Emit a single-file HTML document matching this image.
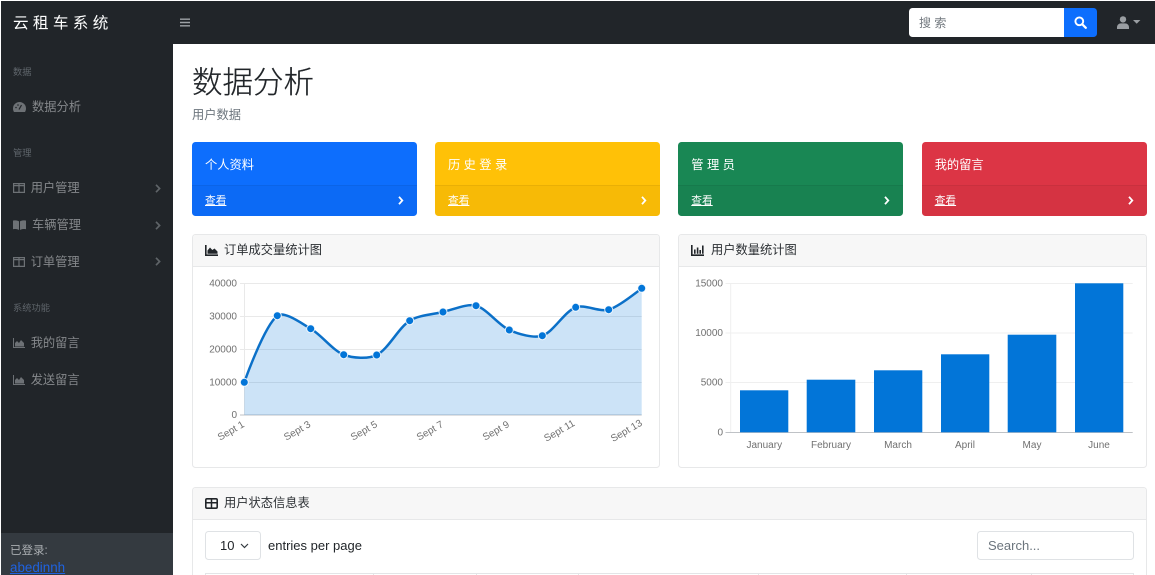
<!DOCTYPE html>
<html lang="zh">
<head>
<meta charset="utf-8">
<title>云租车系统</title>
<style>
html,body{margin:0;padding:0;background:#fff;width:1155px;height:575px;overflow:hidden}
body{position:relative;font-family:"Liberation Sans","Noto Sans CJK SC",sans-serif;color:#212529;filter:blur(.35px)}
div,a,svg{position:absolute}
.t{white-space:nowrap;line-height:20px;height:20px}
.nav{font-size:12.25px;color:#85888b}
.hd{font-size:9.25px;color:#5f656b}
.card{border-radius:3.5px;color:#fff;overflow:hidden}
.foot{left:0;right:0;top:43px;height:31px;background:rgba(0,0,0,.03);border-top:1px solid rgba(0,0,0,.055);box-sizing:border-box}
.ct{left:13px;top:12.5px;font-size:12.25px;color:#fff}
.v{left:13px;top:49px;font-size:10.7px;color:#fff;text-decoration:underline}
.box{border:1px solid #e7e8e9;border-radius:3.5px;box-sizing:border-box;background:#fff;overflow:hidden}
.ch{left:0;right:0;top:0;height:32px;background:#f7f7f7;border-bottom:1px solid #e7e8e9;box-sizing:border-box}
.ht{font-size:12.25px;color:#2b2f33}
</style>
</head>
<body>
<!-- top bar + sidebar -->
<div style="left:1px;top:1px;width:1154px;height:42.5px;background:#212529"></div>
<div style="left:1px;top:43px;width:172px;height:532px;background:#212529"></div>
<div style="left:1px;top:533px;width:172px;height:42px;background:#343a40"></div>

<div class="t" style="left:13px;top:13.5px;font-size:15.6px;color:#fff">云 租 车 系 统</div>
<svg style="left:180px;top:18px" width="10" height="9" viewBox="0 0 10 9"><path d="M0 .5h10v1.4H0zM0 3.8h10v1.4H0zM0 7.1h10v1.4H0z" fill="#9ea2a6"/></svg>

<div style="left:909px;top:8px;width:155px;height:29px;background:#fff;border-radius:3.5px 0 0 3.5px"></div>
<div class="t" style="left:919px;top:12.5px;font-size:12px;color:#73797f">搜 索</div>
<div style="left:1064px;top:8px;width:32.5px;height:29px;background:#0d6efd;border-radius:0 3.5px 3.5px 0"></div>
<svg style="left:1074px;top:16px" width="13" height="13" viewBox="0 0 13 13"><circle cx="5.3" cy="5.3" r="3.9" fill="none" stroke="#fff" stroke-width="1.9"/><path d="M8.2 8.2l3.6 3.6" stroke="#fff" stroke-width="2.2" stroke-linecap="round"/></svg>
<svg style="left:1117px;top:16px" width="12" height="13" viewBox="0 0 12 13"><circle cx="6" cy="3.4" r="3.2" fill="#9a9ea2"/><path d="M0 13v-1.6C0 9 1.8 7.4 4 7.4h4c2.2 0 4 1.6 4 4V13z" fill="#9a9ea2"/></svg>
<svg style="left:1133px;top:20px" width="8" height="4" viewBox="0 0 8 4"><path d="M0 0h7.4L3.7 3.8z" fill="#9a9ea2"/></svg>

<!-- sidebar -->
<div class="t hd" style="left:13px;top:62px">数据</div>
<svg style="left:13px;top:102px" width="13" height="10" viewBox="0 0 13 10"><path d="M6.5 0A6.5 6.5 0 0 0 0 6.5c0 1.3.4 2.5 1 3.5h11c.6-1 1-2.2 1-3.5A6.5 6.5 0 0 0 6.5 0z" fill="#6d7175"/><path d="M6 7.5L8.5 3" stroke="#212529" stroke-width="1.2"/><circle cx="3" cy="5.5" r=".8" fill="#212529"/><circle cx="5" cy="3" r=".8" fill="#212529"/></svg>
<div class="t nav" style="left:32px;top:97px">数据分析</div>

<div class="t hd" style="left:13px;top:143px">管理</div>
<svg style="left:13px;top:183px" width="12" height="10" viewBox="0 0 12 10"><path d="M.6.6h10.8v8.800H.6zM6 .6v8.800M.6 2.600h10.800" fill="none" stroke="#6d7175" stroke-width="1.2"/></svg>
<div class="t nav" style="left:30.7px;top:178px">用户管理</div>
<svg style="left:154.500px;top:184px" width="6" height="9" viewBox="0 0 6 9"><path d="M1 .8l3.6 3.700L1 8.200" fill="none" stroke="#5f6468" stroke-width="1.7"/></svg>

<svg style="left:13px;top:220px" width="13" height="10" viewBox="0 0 13 10"><path d="M0 .6C2 .2 4.3.4 6 1.400V10C4.300 9 2 8.800 0 9.200zM13 .6C11 .2 8.700.4 7 1.400V10c1.700-1 4-1.200 6-.8z" fill="#6d7175"/></svg>
<div class="t nav" style="left:32px;top:215px">车辆管理</div>
<svg style="left:154.500px;top:221px" width="6" height="9" viewBox="0 0 6 9"><path d="M1 .8l3.6 3.700L1 8.200" fill="none" stroke="#5f6468" stroke-width="1.7"/></svg>

<svg style="left:13px;top:257px" width="12" height="10" viewBox="0 0 12 10"><path d="M.6.6h10.8v8.800H.6zM6 .6v8.800M.6 2.600h10.800" fill="none" stroke="#6d7175" stroke-width="1.2"/></svg>
<div class="t nav" style="left:30.7px;top:251.5px">订单管理</div>
<svg style="left:154.500px;top:257px" width="6" height="9" viewBox="0 0 6 9"><path d="M1 .8l3.6 3.700L1 8.200" fill="none" stroke="#5f6468" stroke-width="1.7"/></svg>

<div class="t hd" style="left:13px;top:298px">系统功能</div>
<svg style="left:13px;top:338px" width="12" height="10" viewBox="0 0 12 10"><path d="M.5 0v9.500H12" fill="none" stroke="#6d7175" stroke-width="1"/><path d="M2 8.500V5l2-2 2 2 2-3 3 3v3.500z" fill="#6d7175"/></svg>
<div class="t nav" style="left:30.7px;top:333px">我的留言</div>
<svg style="left:13px;top:375px" width="12" height="10" viewBox="0 0 12 10"><path d="M.5 0v9.500H12" fill="none" stroke="#6d7175" stroke-width="1"/><path d="M2 8.500V5l2-2 2 2 2-3 3 3v3.500z" fill="#6d7175"/></svg>
<div class="t nav" style="left:30.7px;top:370px">发送留言</div>

<div class="t" style="left:10px;top:541px;font-size:11.5px;color:#a9adb1">已登录:</div>
<a class="t" style="left:10px;top:558px;font-size:13.4px;color:#1f62e0;text-decoration:underline">abedinnh</a>

<!-- heading -->
<div class="t" style="left:192px;top:63px;height:40px;line-height:40px;font-size:30.5px;font-weight:300;color:#212529;-webkit-text-stroke:.25px #212529">数据分析</div>
<div class="t" style="left:192px;top:104.5px;font-size:12.25px;color:#6c757d">用户数据</div>

<!-- colour cards -->
<div class="card" style="left:192px;top:142px;width:224.7px;height:73.5px;background:#0d6efd">
  <div class="t ct">个人资料</div><div class="foot"></div>
  <a class="t v">查看</a>
  <svg style="left:206px;top:54px" width="6" height="9" viewBox="0 0 6 9"><path d="M1 .8l3.300 3.700L1 8.200" fill="none" stroke="#fff" stroke-width="1.8"/></svg>
</div>
<div class="card" style="left:435px;top:142px;width:225px;height:73.5px;background:#ffc107">
  <div class="t ct">历 史 登 录</div><div class="foot"></div>
  <a class="t v">查看</a>
  <svg style="left:206px;top:54px" width="6" height="9" viewBox="0 0 6 9"><path d="M1 .8l3.300 3.700L1 8.200" fill="none" stroke="#fff" stroke-width="1.8"/></svg>
</div>
<div class="card" style="left:678.3px;top:142px;width:225px;height:73.5px;background:#198754">
  <div class="t ct">管 理 员</div><div class="foot"></div>
  <a class="t v">查看</a>
  <svg style="left:206px;top:54px" width="6" height="9" viewBox="0 0 6 9"><path d="M1 .8l3.300 3.700L1 8.200" fill="none" stroke="#fff" stroke-width="1.8"/></svg>
</div>
<div class="card" style="left:921.7px;top:142px;width:225px;height:73.5px;background:#dc3545">
  <div class="t ct">我的留言</div><div class="foot"></div>
  <a class="t v">查看</a>
  <svg style="left:206px;top:54px" width="6" height="9" viewBox="0 0 6 9"><path d="M1 .8l3.300 3.700L1 8.200" fill="none" stroke="#fff" stroke-width="1.8"/></svg>
</div>

<!-- chart cards -->
<div class="box" style="left:191.7px;top:234.3px;width:468px;height:234px"><div class="ch"></div></div>
<div class="box" style="left:678.3px;top:234.3px;width:468.5px;height:234px"><div class="ch"></div></div>
<div class="box" style="left:191.7px;top:487.3px;width:955px;height:100px"><div class="ch" style="height:31.5px"></div></div>

<svg style="left:205px;top:244px" width="13" height="12" viewBox="0 0 13 12"><path d="M.8 1v10.200H13" fill="none" stroke="#212529" stroke-width="1.6"/><path d="M2.500 9.800V6.500L5 3.500l2.300 2.500L9.500 4.500 12.500 7.500v2.300z" fill="#212529"/></svg>
<div class="t ht" style="left:224px;top:240px">订单成交量统计图</div>
<svg style="left:691px;top:244px" width="13" height="12" viewBox="0 0 13 12"><path d="M.8 1v10.200H13" fill="none" stroke="#212529" stroke-width="1.6"/><path d="M3 5.500h1.600v4.300H3zM5.800 3.500h1.600v6.300H5.800zM8.400 6h1.600v3.800H8.400zM11 1.500h1.600v8.300H11z" fill="#212529"/></svg>
<div class="t ht" style="left:711px;top:240px">用户数量统计图</div>
<svg style="left:205px;top:498px" width="13" height="11" viewBox="0 0 13 11"><rect x=".8" y=".8" width="11.400" height="9.400" rx="1.200" fill="none" stroke="#212529" stroke-width="1.6"/><path d="M.8 4.800h11.400M6.500 1v9" stroke="#212529" stroke-width="1.500"/></svg>
<div class="t ht" style="left:224px;top:493px">用户状态信息表</div>

<!-- charts -->
<svg style="left:0;top:0" width="1155" height="575" viewBox="0 0 1155 575" font-family="'Liberation Sans',sans-serif" font-size="10" fill="#707070">
  <g stroke="#e9e9e9" stroke-width="1">
    <path d="M240 283.500H641.700M240 316.500H641.700M240 349.500H641.700M240 382.500H641.700M244.500 283V415"/>
  </g>
  <path d="M240 415H641.700" stroke="#bfc2c6" stroke-width="1"/>
  <path d="M244.300 382.300C244.300 382.300 263.900 326.550 277.300 315.700C283.800 310.500 301.500 323.300 310.700 328.700C321.500 335 332.600 350.300 343.700 354.700C352.400 358.200 368.600 359.200 376.700 355C388.400 349 398.200 328.200 409.700 320.700C418 315.300 432.900 314.300 443 312C452.800 309.800 467 303.300 476 305.700C486.900 308.700 498.400 325 509.300 330C518.200 334 533.700 338.650 542.300 335.700C553.600 331.800 564.300 311.750 575.700 307.300C584.300 303.900 599.700 312.300 608.700 309.700C619.500 306.600 641.700 288.300 641.700 288.300V415H244.300Z" fill="rgba(2,117,216,.2)"/>
  <path d="M244.300 382.300C244.300 382.300 263.900 326.550 277.300 315.700C283.800 310.500 301.500 323.300 310.700 328.700C321.500 335 332.600 350.300 343.700 354.700C352.400 358.200 368.600 359.200 376.700 355C388.400 349 398.200 328.200 409.700 320.700C418 315.300 432.900 314.300 443 312C452.800 309.800 467 303.300 476 305.700C486.900 308.700 498.400 325 509.300 330C518.200 334 533.700 338.650 542.300 335.700C553.600 331.800 564.300 311.750 575.700 307.300C584.300 303.900 599.700 312.300 608.700 309.700C619.500 306.600 641.700 288.300 641.700 288.300" fill="none" stroke="#0b70c8" stroke-width="2.500"/>
  <g fill="#0275d8" stroke="rgba(255,255,255,.85)" stroke-width="1">
    <circle cx="244.300" cy="382.300" r="4"/><circle cx="277.300" cy="315.700" r="4"/><circle cx="310.700" cy="328.700" r="4"/><circle cx="343.700" cy="354.700" r="4"/><circle cx="376.700" cy="355" r="4"/><circle cx="409.700" cy="320.700" r="4"/><circle cx="443" cy="312" r="4"/><circle cx="476" cy="305.700" r="4"/><circle cx="509.300" cy="330" r="4"/><circle cx="542.300" cy="335.700" r="4"/><circle cx="575.700" cy="307.300" r="4"/><circle cx="608.700" cy="309.700" r="4"/><circle cx="641.700" cy="288.300" r="4"/>
  </g>
  <g text-anchor="end">
    <text x="237" y="286.500">40000</text><text x="237" y="319.500">30000</text><text x="237" y="352.500">20000</text><text x="237" y="385.500">10000</text><text x="237" y="418">0</text>
  </g>
  <g text-anchor="middle">
    <text transform="translate(232.500 433.500) rotate(-30)">Sept 1</text>
    <text transform="translate(298.800 433.500) rotate(-30)">Sept 3</text>
    <text transform="translate(365.500 433.500) rotate(-30)">Sept 5</text>
    <text transform="translate(431.500 433.500) rotate(-30)">Sept 7</text>
    <text transform="translate(497.500 433.500) rotate(-30)">Sept 9</text>
    <text transform="translate(561 433.500) rotate(-30)">Sept 11</text>
    <text transform="translate(628 433.500) rotate(-30)">Sept 13</text>
  </g>

  <path d="M725.500 283.500H1132.700M725.500 333H1132.700M725.500 382.500H1132.700M730.700 283V432" stroke="#efefef" stroke-width="1"/>
  <path d="M725.500 432.500H1132.700" stroke="#bfc2c6" stroke-width="1"/>
  <g fill="#0275d8">
    <rect x="740" y="390.300" width="48.300" height="42"/>
    <rect x="806.700" y="379.700" width="48.600" height="52.600"/>
    <rect x="874" y="370.300" width="48.300" height="62"/>
    <rect x="941" y="354.300" width="48.300" height="78"/>
    <rect x="1007.700" y="334.700" width="48.600" height="97.600"/>
    <rect x="1075" y="283.300" width="48.300" height="149"/>
  </g>
  <g text-anchor="end">
    <text x="723" y="286.500">15000</text><text x="723" y="336">10000</text><text x="723" y="385.500">5000</text><text x="723" y="435.500">0</text>
  </g>
  <g text-anchor="middle">
    <text x="764.300" y="448">January</text><text x="831" y="448">February</text><text x="898" y="448">March</text><text x="965" y="448">April</text><text x="1032" y="448">May</text><text x="1099" y="448">June</text>
  </g>
</svg>

<!-- table controls -->
<div style="left:205.3px;top:531.3px;width:55.5px;height:29px;border:1px solid #dfe2e5;border-radius:3.5px;box-sizing:border-box"></div>
<div class="t" style="left:220px;top:536px;font-size:13px;color:#212529">10</div>
<svg style="left:240px;top:543px" width="9" height="6" viewBox="0 0 9 6"><path d="M1 1l3.500 3.500L8 1" fill="none" stroke="#343a40" stroke-width="1.2"/></svg>
<div class="t" style="left:268px;top:536px;font-size:13px;color:#212529">entries per page</div>
<div style="left:977.3px;top:531.3px;width:156.5px;height:29px;border:1px solid #dfe2e5;border-radius:3.5px;box-sizing:border-box"></div>
<div class="t" style="left:988px;top:536px;font-size:13px;color:#6c757d">Search...</div>
<div style="left:205.3px;top:573px;width:928.5px;height:1px;background:#e3e5e7"></div>
<div style="left:205.3px;top:573px;width:1px;height:2px;background:#e3e5e7"></div>
<div style="left:373.3px;top:573px;width:1px;height:2px;background:#e3e5e7"></div>
<div style="left:476px;top:573px;width:1px;height:2px;background:#e3e5e7"></div>
<div style="left:577.7px;top:573px;width:1px;height:2px;background:#e3e5e7"></div>
<div style="left:757.7px;top:573px;width:1px;height:2px;background:#e3e5e7"></div>
<div style="left:905.7px;top:573px;width:1px;height:2px;background:#e3e5e7"></div>
<div style="left:1031.3px;top:573px;width:1px;height:2px;background:#e3e5e7"></div>
<div style="left:1133px;top:573px;width:1px;height:2px;background:#e3e5e7"></div>
</body>
</html>
